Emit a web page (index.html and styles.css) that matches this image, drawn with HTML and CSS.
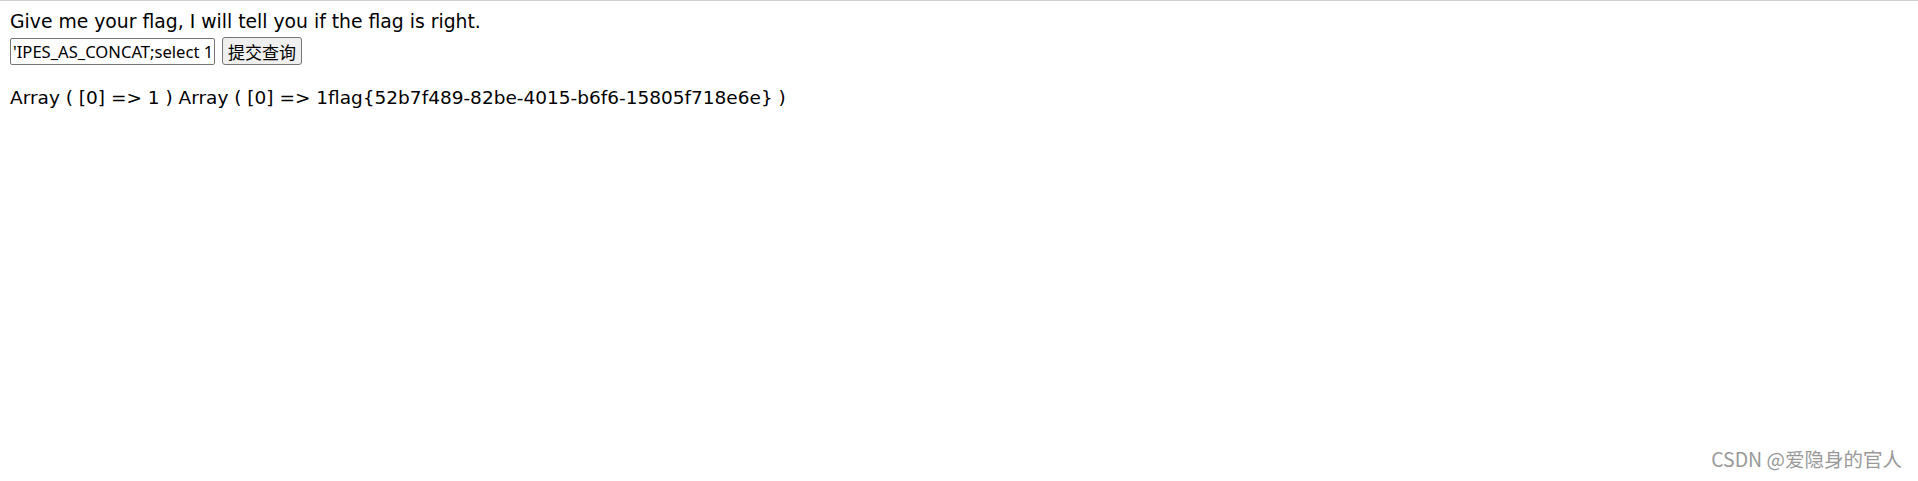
FILE: index.html
```html
<!DOCTYPE html>
<html>
<head>
<meta charset="utf-8">
<link rel="stylesheet" href="styles.css">
</head>
<body>
<div class="page">
  <div class="title">Give me your flag, I will tell you if the flag is right.</div>
  <form class="form">
    <input class="field" type="text" value="'IPES_AS_CONCAT;select 1">
    <button class="btn" type="button">提交查询</button>
  </form>
  <div class="result">Array ( [0] =&gt; 1 ) Array ( [0] =&gt; 1flag{52b7f489-82be-4015-b6f6-15805f718e6e} )</div>
</div>
<div class="watermark">CSDN @爱隐身的官人</div>
</body>
</html>
```
FILE: styles.css
```css
html, body {
  margin: 0;
  padding: 0;
  background: #fff;
  height: 100%;
}
body {
  border-top: 1px solid #cfcfcf;
  box-sizing: border-box;
  position: relative;
  font-family: "DejaVu Sans", "Noto Sans CJK SC", sans-serif;
  color: #000;
}
.page {
  padding: 9px 10px 0 10px;
}
.title {
  font-size: 18.8px;
  line-height: 24px;
  height: 26px;
}
.form {
  display: flex;
  align-items: center;
  gap: 7px;
  margin: 0;
  height: 30px;
}
.field {
  box-sizing: border-box;
  width: 205px;
  height: 27px;
  border: 1px solid #767676;
  border-radius: 2px;
  padding: 0 2px;
  font-family: "Noto Sans", sans-serif;
  font-size: 16.6px;
  color: #000;
}
.btn {
  box-sizing: border-box;
  height: 28px;
  padding: 0 5px;
  border: 1px solid #767676;
  border-radius: 3px;
  background: #efefef;
  font-family: "Noto Sans CJK SC", sans-serif;
  font-size: 17px;
  color: #000;
}
.result {
  margin-top: 20px;
  font-size: 18.5px;
  line-height: 24px;
}
.watermark {
  position: absolute;
  right: 16px;
  bottom: 8px;
  font-family: "Noto Sans CJK SC", sans-serif;
  font-size: 19.5px;
  color: #999;
  text-shadow: 0 0 1px #fff;
}
```
